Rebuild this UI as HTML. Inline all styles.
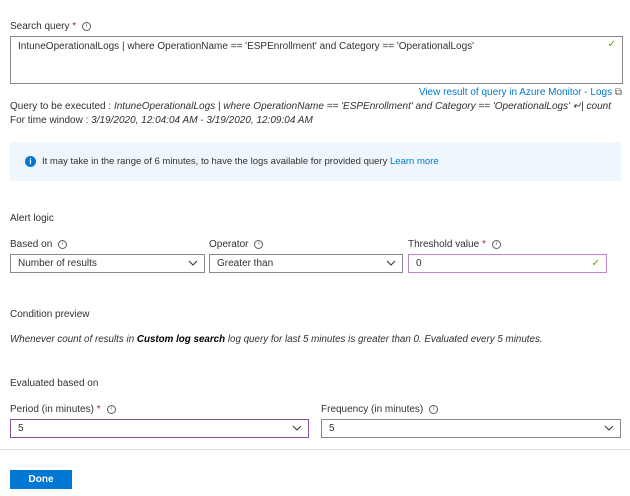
<!DOCTYPE html>
<html><head><style>
*{margin:0;padding:0;box-sizing:border-box}
body{width:630px;height:496px;background:#fff;font-family:"Liberation Sans",sans-serif;font-size:10px;color:#323130;position:relative;overflow:hidden}
.a{position:absolute;white-space:nowrap}
.box{position:absolute;border:1px solid #8a8886;background:#fff}
.req{color:#a4262c}
.i{display:inline-block;width:9px;height:9px;border:1px solid #605e5c;border-radius:50%;font-size:6px;line-height:7px;text-align:center;color:#605e5c;vertical-align:middle;margin-left:6px;font-style:normal}
.chev{position:absolute;right:6px;top:5px}
.val{position:absolute;left:7px;top:3px}
.chk{position:absolute;right:6px;top:3px;color:#57a300;font-size:10px}
</style></head><body>
<div class="a" style="left:10px;top:21px">Search query <span class="req">*</span><span class="i">i</span></div>
<div class="box" style="left:10px;top:36px;width:613px;height:48px"><div class="a" style="left:7px;top:4px">IntuneOperationalLogs | where OperationName == 'ESPEnrollment' and Category == 'OperationalLogs'</div><span class="chk" style="top:2px">✓</span></div>
<div class="a" style="right:8px;top:87px;color:#0078d4">View result of query in Azure Monitor - Logs <span style="color:#605e5c">⧉</span></div>
<div class="a" style="left:10px;top:101px">Query to be executed : <i>IntuneOperationalLogs | where OperationName == 'ESPEnrollment' and Category == 'OperationalLogs' ↵| count</i></div>
<div class="a" style="left:10px;top:115px">For time window : <i>3/19/2020, 12:04:04 AM - 3/19/2020, 12:09:04 AM</i></div>
<div class="a" style="left:10px;top:142px;width:611px;height:39px;background:#eff6fc"></div>
<div class="a" style="left:25px;top:156px;width:11px;height:11px;border-radius:50%;background:#0078d4;color:#fff;font-size:8px;font-weight:bold;text-align:center;line-height:11px">i</div>
<div class="a" style="left:42px;top:156px;font-size:9.5px">It may take in the range of 6 minutes, to have the logs available for provided query <span style="color:#0078d4">Learn more</span></div>
<div class="a" style="left:10px;top:213px">Alert logic</div>
<div class="a" style="left:10px;top:239px">Based on<span class="i">i</span></div>
<div class="a" style="left:209px;top:239px">Operator<span class="i">i</span></div>
<div class="a" style="left:408px;top:239px">Threshold value <span class="req">*</span><span class="i">i</span></div>
<div class="box" style="left:10px;top:254px;width:195px;height:19px"><span class="val">Number of results</span><svg class="chev" width="10" height="7"><path d="M1 1l4 4 4-4" stroke="#323130" fill="none"/></svg></div>
<div class="box" style="left:209px;top:254px;width:194px;height:19px"><span class="val">Greater than</span><svg class="chev" width="10" height="7"><path d="M1 1l4 4 4-4" stroke="#323130" fill="none"/></svg></div>
<div class="box" style="left:408px;top:254px;width:199px;height:19px;border-color:#c283d0"><span class="val">0</span><span class="chk">✓</span></div>
<div class="a" style="left:10px;top:309px">Condition preview</div>
<div class="a" style="left:10px;top:334px;font-style:italic;font-size:9.8px">Whenever count of results in <b style="color:#000">Custom log search</b> log query for last 5 minutes is greater than 0. Evaluated every 5 minutes.</div>
<div class="a" style="left:10px;top:378px">Evaluated based on</div>
<div class="a" style="left:10px;top:404px">Period (in minutes) <span class="req">*</span><span class="i">i</span></div>
<div class="a" style="left:321px;top:404px">Frequency (in minutes)<span class="i">i</span></div>
<div class="box" style="left:10px;top:419px;width:299px;height:19px;border-color:#8b4fa6"><span class="val">5</span><svg class="chev" width="10" height="7"><path d="M1 1l4 4 4-4" stroke="#323130" fill="none"/></svg></div>
<div class="box" style="left:321px;top:419px;width:300px;height:19px"><span class="val">5</span><svg class="chev" width="10" height="7"><path d="M1 1l4 4 4-4" stroke="#323130" fill="none"/></svg></div>
<div class="a" style="left:0;top:449px;width:630px;height:1px;background:#e1dfdd"></div>
<div class="a" style="left:10px;top:470px;width:62px;height:19px;background:#0078d4;color:#fff;font-weight:bold;text-align:center;line-height:19px">Done</div>
</body></html>
